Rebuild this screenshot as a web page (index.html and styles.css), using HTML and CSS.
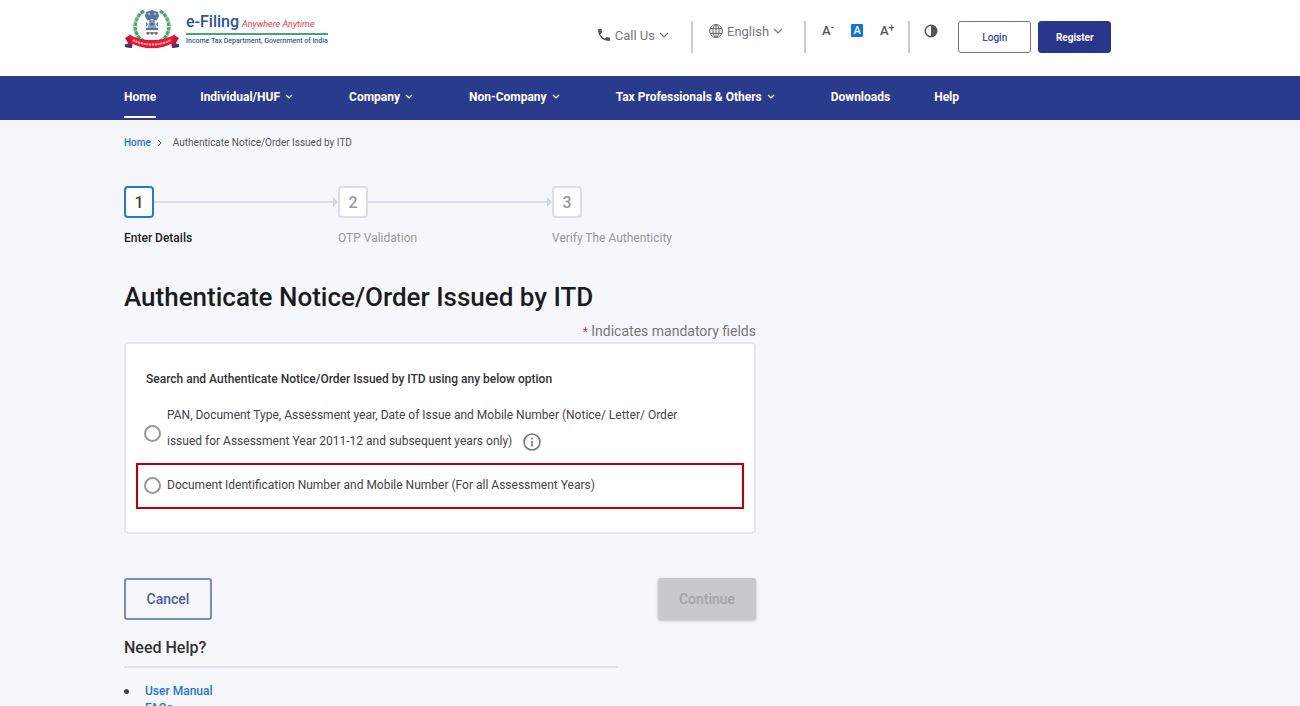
FILE: index.html
```html
<!DOCTYPE html>
<html lang="en">
<head>
<meta charset="utf-8">
<title>Authenticate Notice/Order Issued by ITD</title>
<link rel="stylesheet" href="styles.css">
</head>
<body>
<header class="topbar">
  <a class="brand" href="#">
    <svg class="emblem" viewBox="0 0 56 42" width="56" height="42" aria-hidden="true">
      <path d="M20 3C8 10 8 28 21 34" fill="none" stroke="#48a668" stroke-width="3.4" stroke-dasharray="4 .7"/>
      <path d="M36 3C48 10 48 28 35 34" fill="none" stroke="#48a668" stroke-width="3.4" stroke-dasharray="4 .7"/>
      <path d="M13 9c-5 8-4 18 3 24M43 9c5 8 4 18-3 24" fill="none" stroke="#8ccaa0" stroke-width="1"/>
      <path d="M22 4l3-1 3-1 3 1 3 1 1 4-2 4h-3l-2-1-2 1h-3l-2-4z" fill="#5576a4"/>
      <circle cx="25" cy="6" r="1" fill="#c9d5e5"/><circle cx="31" cy="6" r="1" fill="#c9d5e5"/>
      <path d="M25 12h6l1 8h-8z" fill="#86a0c1"/>
      <path d="M22 14l2 2-2 3zM34 14l-2 2 2 3zM22 20h12v2H22z" fill="#5576a4"/>
      <circle cx="28" cy="16" r="1.6" fill="#3c618f"/>
      <path d="M22 25h12M24 24v3M28 24v3M32 24v3" stroke="#444" stroke-width="1"/>
      <path d="M1 30l5-3 3 7-1 6-7-1 3-4zM55 30l-5-3-3 7 1 6 7-1-3-4z" fill="#c9152c"/>
      <path d="M1 36l7 1v3l-7-1zM55 36l-7 1v3l7-1z" fill="#27417e"/>
      <path d="M5 26c12 8 34 8 46 0l-2 9c-12 7-30 7-42 0z" fill="#e51b35"/>
      <path d="M9 32c11 6 27 6 38 0" fill="none" stroke="#f9bac2" stroke-width="2" stroke-dasharray="2 .8"/>
    </svg>
    <span class="brand-text">
      <span class="brand-line"><span class="brand-name">e-Filing</span><em class="brand-tag">Anywhere Anytime</em></span>
      <span class="brand-dept">Income Tax Department, Government of India</span>
    </span>
  </a>
  <div class="tools">
    <button class="tool call" type="button">
      <svg viewBox="0 0 24 24" width="16" height="16" aria-hidden="true"><path fill="#555" d="M6.600 10.800c1.400 2.800 3.800 5.100 6.600 6.600l2.200-2.200c.3-.3.7-.4 1-.2 1.100.4 2.300.6 3.600.6.600 0 1 .4 1 1V20c0 .6-.4 1-1 1C10.600 21 3 13.400 3 4c0-.6.4-1 1-1h3.500c.6 0 1 .4 1 1 0 1.200.2 2.400.6 3.600.1.300 0 .7-.3 1z"/></svg>
      <span>Call Us</span>
      <svg class="caret" viewBox="0 0 10 10" width="10" height="10" aria-hidden="true"><path d="M1 3l4 4 4-4"/></svg>
    </button>
    <button class="tool language" type="button">
      <svg viewBox="0 0 16 16" width="16" height="16" fill="none" stroke="#666" aria-hidden="true"><circle cx="8" cy="8" r="6.400"/><ellipse cx="8" cy="8" rx="3" ry="6.400"/><path d="M2 5.700h12M2 10.300h12M8 1.500v13"/></svg>
      <span>English</span>
      <svg class="caret" viewBox="0 0 10 10" width="10" height="10" aria-hidden="true"><path d="M1 3l4 4 4-4"/></svg>
    </button>
    <div class="sizes">
      <button class="size" type="button" aria-label="Decrease text size">A<sup>-</sup></button>
      <button class="size current" type="button" aria-label="Normal text size">A</button>
      <button class="size" type="button" aria-label="Increase text size">A<sup>+</sup></button>
    </div>
    <button class="contrast" type="button" aria-label="Contrast">
      <svg viewBox="0 0 14 14" width="14" height="14" aria-hidden="true"><circle cx="7" cy="7" r="5.800" fill="#fff" stroke="#555" stroke-width="1.400"/><path d="M7 1a6 6 0 0 1 0 12z" fill="#555"/></svg>
    </button>
    <div class="account">
      <button class="login" type="button">Login</button>
      <button class="register" type="button">Register</button>
    </div>
  </div>
</header>
<nav class="mainnav">
  <a class="active" href="#">Home</a>
  <a class="drop" href="#">Individual/HUF <svg class="caret" viewBox="0 0 8 8" width="8" height="8" aria-hidden="true"><path d="M1 2l3 3 3-3"/></svg></a>
  <a class="drop" href="#">Company <svg class="caret" viewBox="0 0 8 8" width="8" height="8" aria-hidden="true"><path d="M1 2l3 3 3-3"/></svg></a>
  <a class="drop" href="#">Non-Company <svg class="caret" viewBox="0 0 8 8" width="8" height="8" aria-hidden="true"><path d="M1 2l3 3 3-3"/></svg></a>
  <a class="drop" href="#">Tax Professionals &amp; Others <svg class="caret" viewBox="0 0 8 8" width="8" height="8" aria-hidden="true"><path d="M1 2l3 3 3-3"/></svg></a>
  <a href="#">Downloads</a>
  <a href="#">Help</a>
</nav>
<main class="page">
  <div class="crumbs"><a href="#">Home</a><svg viewBox="0 0 6 8" width="6" height="8" aria-hidden="true"><path d="M1 1l3 3-3 3" fill="none" stroke="#555"/></svg><span>Authenticate Notice/Order Issued by ITD</span></div>
  <ol class="steps">
    <li class="step current"><span class="marker"><span class="number">1</span></span><span class="label">Enter Details</span></li>
    <li class="step"><span class="marker"><span class="number">2</span></span><span class="label">OTP Validation</span></li>
    <li class="step"><span class="marker"><span class="number">3</span></span><span class="label">Verify The Authenticity</span></li>
  </ol>
  <h1>Authenticate Notice/Order Issued by ITD</h1>
  <p class="mandatory"><span class="star">*</span> Indicates mandatory fields</p>
  <form>
    <fieldset class="card">
      <legend>Search and Authenticate Notice/Order Issued by ITD using any below option</legend>
      <div class="option wrapped">
        <input type="radio" name="method" id="by-pan">
        <label for="by-pan">PAN, Document Type, Assessment year, Date of Issue and Mobile Number (Notice/ Letter/ Order issued for Assessment Year 2011-12 and subsequent years only)
          <svg class="info" viewBox="0 0 18 18" width="18" height="18" aria-hidden="true"><circle cx="9" cy="9" r="8" fill="none" stroke="#777" stroke-width="1.600"/><path d="M9 4.500v2M9 8v5.500" stroke="#777" stroke-width="1.600"/></svg>
        </label>
      </div>
      <div class="option highlighted">
        <input type="radio" name="method" id="by-din">
        <label for="by-din">Document Identification Number and Mobile Number (For all Assessment Years)</label>
      </div>
    </fieldset>
    <div class="actions">
      <button class="cancel" type="button">Cancel</button>
      <button class="continue" type="submit" disabled>Continue</button>
    </div>
  </form>
  <section class="help">
    <h2>Need Help?</h2>
    <ul>
      <li><a href="#">User Manual</a></li>
      <li><a href="#">FAQs</a></li>
    </ul>
  </section>
</main>
</body>
</html>
```

FILE: styles.css
```css
* { box-sizing: border-box; }
body {
  margin: 0;
  height: 100vh;
  overflow-x: hidden;
  overflow-y: auto;
  scrollbar-width: none;
  background: #f5f7fb;
  color: #333;
  font-family: Roboto, "Liberation Sans", sans-serif;
  font-size: 12px;
}
a { color: #2a73d0; text-decoration: none; }
button { font-family: inherit; cursor: pointer; }
.caret path { fill: none; stroke: currentColor; stroke-width: 1.2; }

.topbar {
  display: flex;
  align-items: flex-start;
  height: 76px;
  padding-left: 124px;
  background: #fff;
}
.brand { display: flex; gap: 6px; margin-top: 8px; }
.brand-text { display: flex; flex-direction: column; margin-top: 5px; }
.brand-line {
  display: flex;
  align-items: baseline;
  gap: 3px;
  line-height: 18px;
  border-bottom: 2px solid #48a668;
}
.brand-name { color: #27559b; font-size: 16px; font-weight: 500; }
.brand-tag { color: #e8354b; font-size: 9px; }
.brand-dept { color: #2b6294; font-size: 7px; font-weight: 500; line-height: 13px; white-space: nowrap; }

.tools { display: flex; margin: 21px 0 0 268px; color: #777; white-space: nowrap; }
.tools button { flex: none; padding: 0; border: 0; background: none; color: inherit; }
.tools .tool { display: flex; align-items: center; gap: 3px; font-size: 13px; }
.tools .tool .caret { margin-left: 1px; }
.tools .call { height: 28px; margin-right: 22px; }
.tools .language {
  box-sizing: content-box;
  height: 20px;
  padding: 0 21px 12px 15px;
  border-left: 2px solid #ccc;
}
.sizes { display: flex; gap: 17px; height: 32px; padding: 3px 14px 0 16px; border: solid #ccc; border-width: 0 2px; }
.sizes .size { display: flex; height: 13px; color: #555; font-size: 13px; font-weight: 500; line-height: 13px; }
.size sup { font-size: 10px; line-height: 8px; }
.tools .sizes .current { width: 12px; justify-content: center; border-radius: 1px; background: #0d72dc; color: #fff; font-size: 11px; }
.tools .contrast { height: 14px; margin: 3px 0 0 14px; }
.contrast svg { display: block; }
.account { display: flex; gap: 7px; margin-left: 20px; }
.tools .login, .tools .register {
  width: 73px;
  height: 32px;
  border: 1px solid #6672b5;
  border-radius: 3px;
  color: #3a4aa0;
  font-size: 10px;
  font-weight: 500;
}
.tools .register { border-color: #28378b; background: #28378b; color: #fff; font-weight: 700; }

.mainnav {
  display: flex;
  align-items: flex-start;
  gap: 44px;
  height: 44px;
  padding-left: 124px;
  background: #2a3b8e;
}
.mainnav a {
  height: 42px;
  color: #fff;
  font-weight: 700;
  line-height: 42px;
  white-space: nowrap;
}
.mainnav .active { border-bottom: 2px solid #fff; }
.mainnav .drop { padding-right: 12px; }
.mainnav .caret { margin-left: 2px; }

.page { max-width: 756px; padding-left: 124px; }
.crumbs { display: flex; align-items: center; gap: 6px; padding-top: 14px; font-size: 10px; line-height: 18px; color: #555; }
.crumbs a { font-weight: 500; }
.crumbs span { margin-left: 4px; }

.steps { display: flex; margin: 34px 0 0; padding: 0; list-style: none; }
.step { flex: 0 0 214px; color: #999; }
.marker { display: flex; align-items: center; }
.number {
  width: 30px;
  height: 32px;
  border: 2px solid #dcdcef;
  border-radius: 4px;
  background: #fff;
  font-size: 16px;
  font-weight: 500;
  line-height: 30px;
  text-align: center;
}
.step:not(:last-child) .marker::before { content: ""; order: 1; flex: 1; height: 2px; background: #dcdcef; }
.step:not(:last-child) .marker::after { content: ""; order: 2; border: 5px solid transparent; border-right: 0; border-left-color: #d2d2ea; }
.label { display: block; margin-top: 12px; line-height: 16px; }
.current .number { border-color: #2179d8; color: #444; }
.current .label { color: #222; font-weight: 500; }

h1 { margin: 33px 0 0; color: #1c1c1e; font-size: 26px; font-weight: 500; line-height: 36px; }
.mandatory { margin: 6px 0 0; color: #777; font-size: 14px; line-height: 20px; text-align: right; }
.star { color: #d43a3a; font-size: 12px; }

.card {
  display: flex;
  flex-direction: column;
  min-width: 0;
  margin: 0;
  padding: 27px 10px 23px;
  border: 2px solid #e6e7f2;
  border-radius: 4px;
  background: #fff;
}
.card legend { float: left; margin-bottom: 8px; padding: 0 10px; font-weight: 500; line-height: 16px; }
.option { display: flex; align-items: center; gap: 6px; padding: 7px 50px 9px 8px; line-height: 26px; color: #444; }
.option input {
  appearance: none;
  flex: none;
  width: 17px;
  height: 17px;
  margin: 0;
  border: 2px solid #999;
  border-radius: 50%;
  background: #fff;
}
.option input:checked { border: 5px solid #2179d8; }
.wrapped input { margin-top: 10px; }
.info { margin-left: 8px; vertical-align: middle; }
.highlighted { padding-left: 6px; border: 2px solid #c00000; }

.actions { display: flex; justify-content: space-between; margin-top: 44px; }
.actions button { height: 42px; border-radius: 3px; font-size: 14px; font-weight: 500; }
.cancel { width: 88px; border: 2px solid #7f89c0; background: transparent; color: #4d599f; }
.actions .continue { width: 98px; border: 0; background: #c9c9cd; color: #a3a3a8; box-shadow: 0 1px 3px #bbb; }

.help { max-width: 494px; }
.help h2 { margin: 16px 0 0; padding-bottom: 6px; border-bottom: 2px solid #dfe0f0; font-size: 16px; font-weight: 500; line-height: 24px; }
.help ul { margin: 15px 0 0; padding: 0; list-style: none; }
.help li { display: flex; align-items: center; gap: 16px; line-height: 17px; }
.help li::before { content: ""; width: 5px; height: 5px; border-radius: 50%; background: #444; }
.help li a { font-weight: 500; }
```
